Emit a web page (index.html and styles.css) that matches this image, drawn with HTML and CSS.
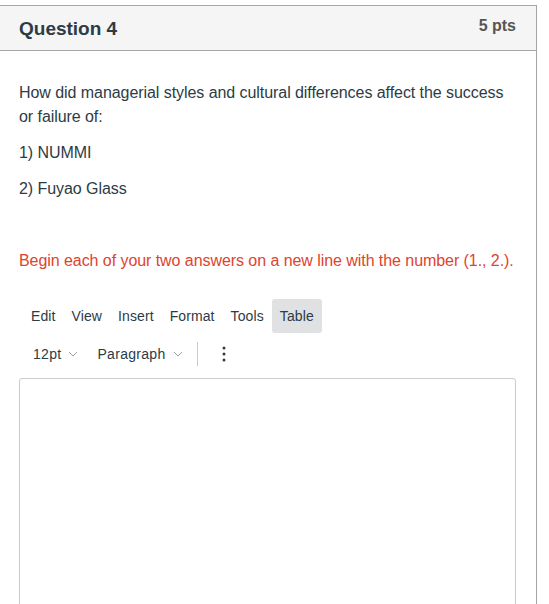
FILE: index.html
```html
<!DOCTYPE html>
<html>
<head>
<meta charset="utf-8">
<link rel="stylesheet" href="styles.css">
</head>
<body>
<div class="card">
  <div class="header">
    <span class="title">Question 4</span>
    <span class="pts">5 pts</span>
  </div>
  <div class="body">
    <p>How did managerial styles and cultural differences affect the success or failure of:</p>
    <p>1) NUMMI</p>
    <p>2) Fuyao Glass</p>
    <p class="empty">&nbsp;</p>
    <p class="red">Begin each of your two answers on a new line with the number (1., 2.).</p>
    <div class="editor">
      <div class="menubar">
        <span class="mi">Edit</span>
        <span class="mi">View</span>
        <span class="mi">Insert</span>
        <span class="mi">Format</span>
        <span class="mi">Tools</span>
        <span class="mi active">Table</span>
      </div>
      <div class="toolbar">
        <span class="tb">12pt <svg class="chev" width="10" height="6" viewBox="0 0 10 6"><path d="M1 1l4 4 4-4" fill="none" stroke="#a0a5aa" stroke-width="1"/></svg></span>
        <span class="tb">Paragraph <svg class="chev" width="10" height="6" viewBox="0 0 10 6"><path d="M1 1l4 4 4-4" fill="none" stroke="#a0a5aa" stroke-width="1"/></svg></span>
        <span class="sep"></span>
        <span class="kebab"><svg width="4" height="16" viewBox="0 0 4 16"><circle cx="2" cy="2" r="1.5" fill="#2d3b45"/><circle cx="2" cy="8" r="1.5" fill="#2d3b45"/><circle cx="2" cy="14" r="1.5" fill="#2d3b45"/></svg></span>
      </div>
      <div class="area"></div>
    </div>
  </div>
</div>
</body>
</html>
```
FILE: styles.css
```css
html, body {
  margin: 0;
  padding: 0;
  background: #fff;
  overflow: hidden;
}
body {
  padding-top: 5px;
  font-family: "Liberation Sans", Arial, sans-serif;
  color: #2d3b45;
}
.card {
  margin-left: -1px;
  width: 536px;
  border: 1px solid #a5a5a5;
  border-bottom: none;
  height: 700px;
}
.header {
  display: flex;
  justify-content: space-between;
  align-items: flex-start;
  background: #f5f5f5;
  border-bottom: 1px solid #a5a5a5;
  height: 44px;
  padding: 0 20px 0 19px;
}
.title {
  font-size: 19px;
  font-weight: bold;
  color: #2d3b45;
  margin-top: 12px;
}
.pts {
  font-size: 16px;
  font-weight: bold;
  color: #555;
  margin-top: 11px;
}
.body {
  padding: 30px 20px 0 19px;
}
.body p {
  margin: 0 0 12px 0;
  font-size: 16px;
  line-height: 24px;
  letter-spacing: -0.06px;
}
.red {
  color: #e0432d;
}
.body p.red {
  margin-bottom: 26px;
}
.editor {
  width: 497px;
}
.menubar {
  display: flex;
  align-items: center;
  padding-left: 4px;
  height: 34px;
}
.mi {
  font-size: 14px;
  letter-spacing: 0.1px;
  padding: 0 8px;
  height: 34px;
  line-height: 34px;
  border-radius: 3px;
  color: #2d3b45;
}
.active {
  background: #dfe1e3;
}
.toolbar {
  display: flex;
  align-items: center;
  height: 42px;
  padding-left: 6px;
}
.tb {
  font-size: 14px;
  letter-spacing: 0.3px;
  padding: 0 8px;
  display: flex;
  align-items: center;
  gap: 7px;
}
.tb + .tb {
  margin-left: 3px;
}
.chev {
  display: block;
}
.sep {
  width: 1px;
  height: 24px;
  background: #ccc;
  margin-left: 6px;
}
.kebab {
  margin-left: 24px;
  display: flex;
}
.area {
  margin-top: 3px;
  border: 1px solid #ccc;
  border-radius: 3px;
  height: 300px;
}
```
